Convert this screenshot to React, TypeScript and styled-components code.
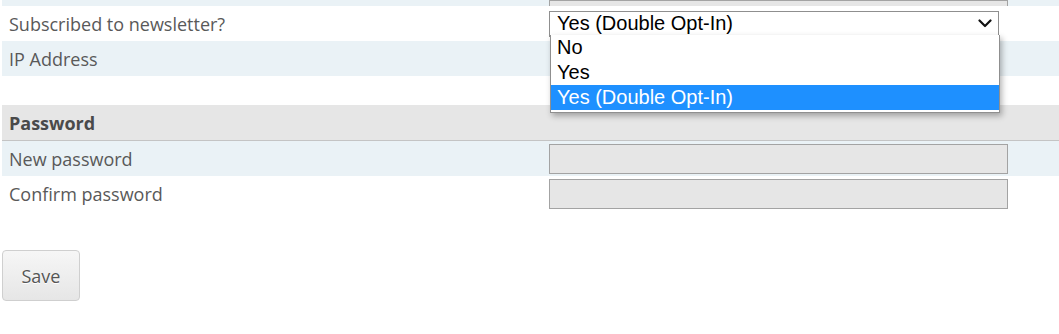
import React from "react";
import styled, { createGlobalStyle } from "styled-components";

const GlobalStyle = createGlobalStyle`
  body {
    margin: 0;
    background: #fff;
    font-family: "Open Sans", "Liberation Sans", sans-serif;
  }
`;

const Page = styled.div`
  display: flex;
  flex-direction: column;
  padding: 0 0 0 2px;
`;

const Table = styled.div`
  display: flex;
  flex-direction: column;
`;

const Row = styled.div<{ shaded?: boolean; short?: boolean }>`
  display: grid;
  grid-template-columns: 547px 1fr;
  align-items: center;
  height: ${({ short }) => (short ? "6px" : "35px")};
  overflow: ${({ short }) => (short ? "hidden" : "visible")};
  background-color: ${({ shaded }) => (shaded ? "#eaf2f6" : "#fff")};
`;

const Label = styled.div`
  padding-left: 7px;
  font-size: 18px;
  color: #595959;
`;

const Field = styled.div<{ bottom?: boolean }>`
  position: relative;
  display: flex;
  align-items: ${({ bottom }) => (bottom ? "flex-end" : "center")};
  height: 100%;
  padding-bottom: ${({ bottom }) => (bottom ? "3px" : "0")};
  box-sizing: border-box;
`;

const TextInput = styled.div<{ w: number }>`
  width: ${({ w }) => w}px;
  height: 30px;
  box-sizing: border-box;
  background-color: #e6e6e6;
  border: 1px solid #a3a3a3;
`;

const Spacer = styled.div`
  height: 29px;
`;

const HeaderRow = styled.div`
  display: flex;
  align-items: center;
  height: 35px;
  padding-left: 7px;
  background-color: #e6e6e6;
  border-bottom: 1px solid #c4c4c4;
  font-size: 18px;
  font-weight: bold;
  color: #4a4a4a;
`;

const SelectBox = styled.div`
  display: flex;
  align-items: center;
  justify-content: space-between;
  width: 450px;
  height: 26px;
  box-sizing: border-box;
  padding: 0 6px 0 7px;
  background-color: #fff;
  border: 1px solid #8f8f8f;
  font-family: "Liberation Sans", Arial, sans-serif;
  font-size: 20px;
  color: #000;
`;

const OptionList = styled.div`
  position: absolute;
  top: 29px;
  left: 1px;
  width: 450px;
  box-sizing: border-box;
  padding-bottom: 2px;
  background-color: #fff;
  border: 1px solid #8f8f8f;
  border-top: none;
  box-shadow: 2px 3px 6px rgba(0, 0, 0, 0.3);
  z-index: 2;
`;

const Option = styled.div<{ selected?: boolean }>`
  display: flex;
  align-items: center;
  height: 25px;
  padding-left: 6px;
  font-family: "Liberation Sans", Arial, sans-serif;
  font-size: 20px;
  color: ${({ selected }) => (selected ? "#fff" : "#000")};
  background-color: ${({ selected }) => (selected ? "#1e90ff" : "transparent")};
`;

const Actions = styled.div`
  display: flex;
  padding-top: 39px;
`;

const SaveButton = styled.button`
  width: 78px;
  height: 51px;
  border: 1px solid #cfcfcf;
  border-radius: 4px;
  background: linear-gradient(#f6f6f6, #e6e6e6);
  font-family: "Open Sans", "Liberation Sans", sans-serif;
  font-size: 18px;
  color: #555;
  text-shadow: 0 1px 0 #fff;
  cursor: pointer;
`;

function Chevron(): JSX.Element {
  return (
    <svg width="14" height="9" viewBox="0 0 14 9" fill="none">
      <path
        d="M1.5 1.5l5.5 5.5 5.5-5.5"
        stroke="#111"
        strokeWidth="2.2"
        strokeLinecap="round"
        strokeLinejoin="round"
      />
    </svg>
  );
}

const options = ["No", "Yes", "Yes (Double Opt-In)"];

export default function App() {
  return (
    <>
      <GlobalStyle />
      <Page>
        <Table>
          <Row shaded short>
            <div />
            <Field bottom>
              <TextInput w={459} />
            </Field>
          </Row>
          <Row>
            <Label>Subscribed to newsletter?</Label>
            <Field>
              <SelectBox>
                <span>Yes (Double Opt-In)</span>
                <Chevron />
              </SelectBox>
              <OptionList>
                {options.map((o) => (
                  <Option key={o} selected={o === "Yes (Double Opt-In)"}>
                    {o}
                  </Option>
                ))}
              </OptionList>
            </Field>
          </Row>
          <Row shaded>
            <Label>IP Address</Label>
            <Field />
          </Row>
          <Spacer />
          <HeaderRow>Password</HeaderRow>
          <Row shaded>
            <Label>New password</Label>
            <Field>
              <TextInput w={459} />
            </Field>
          </Row>
          <Row>
            <Label>Confirm password</Label>
            <Field>
              <TextInput w={459} />
            </Field>
          </Row>
        </Table>
        <Actions>
          <SaveButton>Save</SaveButton>
        </Actions>
      </Page>
    </>
  );
}
